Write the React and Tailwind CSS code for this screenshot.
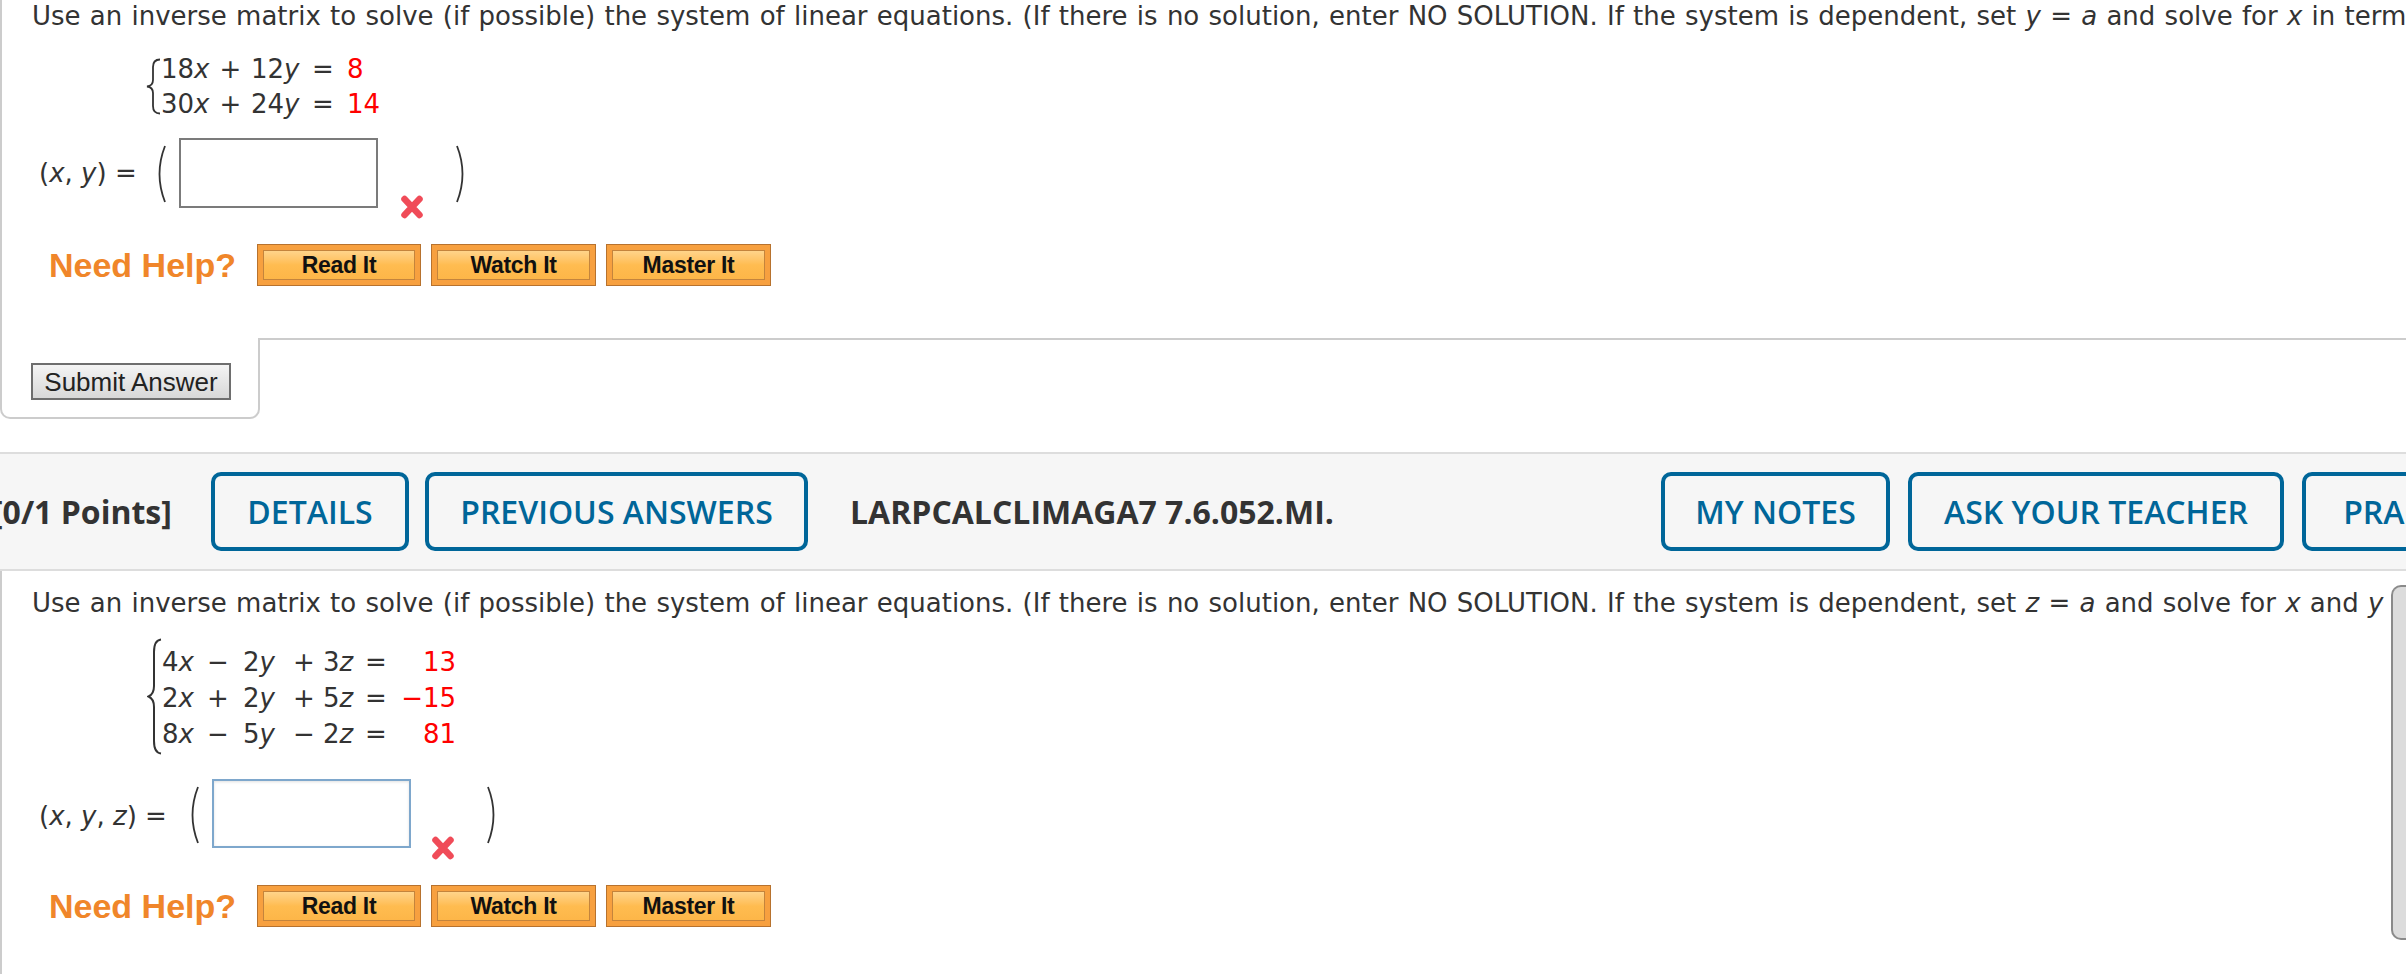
import React from 'react';

// Two-line curly brace
function Brace2() {
  return (
    <svg width="16" height="57" viewBox="0 0 16 57" className="shrink-0 mt-[6px]">
      <path d="M15 1.5 C10 1.5 8 4 8 9 L8 22 C8 26 6 28 2 28.5 C6 29 8 31 8 35 L8 48 C8 53 10 55.5 15 55.5" fill="none" stroke="#333" strokeWidth="1.8" />
    </svg>
  );
}

// Three-line curly brace
function Brace3() {
  return (
    <svg width="15" height="117" viewBox="0 0 15 117" className="shrink-0">
      <path d="M14 1.5 C9 2 7 6 7 14 L7 48 C7 54 5 57 1.5 58.5 C5 60 7 63 7 69 L7 103 C7 111 9 115 14 115.5" fill="none" stroke="#333" strokeWidth="2" />
    </svg>
  );
}

function BigParen({ right }) {
  return (
    <svg width="14" height="58" viewBox="0 0 14 58" className="shrink-0 mt-[7px]">
      <path d={right ? 'M2 1 Q13 29 2 57' : 'M12 1 Q1 29 12 57'} fill="none" stroke="#333" strokeWidth="1.8" />
    </svg>
  );
}

function RedX() {
  return (
    <svg width="26" height="28" viewBox="0 0 26 28" className="shrink-0 mt-[55px]">
      <path d="M5.5 6 L20.5 22 M20.5 6 L5.5 22" stroke="#f04b58" strokeWidth="6.5" strokeLinecap="round" />
    </svg>
  );
}

function HelpRow() {
  return (
    <div className="flex items-center h-[42px] mt-[23px]">
      <div className="w-[225px] pl-[17px] font-['Liberation_Sans',Arial,sans-serif] font-bold text-[34px] leading-none text-[#f0862a]">
        Need Help?
      </div>
      <div className="flex gap-[10px]">
        {['Read It', 'Watch It', 'Master It'].map((label, i) => (
          <div
            key={label}
            className={`${i === 0 ? 'w-[164px]' : 'w-[165px]'} h-[42px] bg-[#f7a03f] border border-[#b7722e] p-[5px]`}
          >
            <div className="h-full border border-[#c4843c] bg-gradient-to-b from-[#ffd48a] via-[#ffbc50] to-[#fdb648] flex items-center justify-center font-['Liberation_Sans',Arial,sans-serif] font-bold text-[23px] tracking-[-0.3px] text-[#111]">
              {label}
            </div>
          </div>
        ))}
      </div>
    </div>
  );
}

function HeaderBtn({ w, children }) {
  return (
    <div className={`shrink-0 ${w} h-[79px] border-4 border-[#006699] rounded-[10px] flex items-center justify-center text-[#006699] text-[32px] font-semibold`}>
      {children}
    </div>
  );
}

export default function App() {
  return (
    <div className="relative w-[2406px] h-[974px] overflow-hidden bg-white text-[#333] font-['DejaVu_Sans',Verdana,sans-serif]">
      {/* Question 1 */}
      <div className="border-l-2 border-[#cccccc] pl-[30px] pt-[1px] pb-[52px]">
        <p className="text-[26px] leading-[30px] whitespace-nowrap [word-spacing:1px]">
          Use an inverse matrix to solve (if possible) the system of linear equations. (If there is no solution, enter NO SOLUTION. If the system is dependent, set <i>y</i> = <i>a</i> and solve for <i>x</i> in terms of <i>a</i>.)
        </p>

        <div className="flex items-start mt-[21px] ml-[113px]">
          <Brace2 />
          <div className="grid grid-cols-[52px_35px_51px_48px_auto] text-[26px] leading-[35px] whitespace-nowrap">
            <span>18<i>x</i></span><span className="text-center">+</span><span className="pl-[3px]">12<i>y</i></span><span className="text-center">=</span><span className="text-[#ff0000]">8</span>
            <span>30<i>x</i></span><span className="text-center">+</span><span className="pl-[3px]">24<i>y</i></span><span className="text-center">=</span><span className="text-[#ff0000]">14</span>
          </div>
        </div>

        <div className="flex items-start mt-[16px]">
          <span className="w-[114px] ml-[7px] mt-[20px] text-[26px] leading-[30px] whitespace-nowrap">
            (<i>x</i>, <i>y</i>) =
          </span>
          <BigParen />
          <div className="ml-[12px] w-[199px] h-[70px] border-2 border-[#7b7b7b] bg-white shrink-0" />
          <div className="ml-[21px]"><RedX /></div>
          <div className="ml-[30px]"><BigParen right /></div>
        </div>

        <HelpRow />
      </div>

      {/* Submit tab */}
      <div className="flex">
        <div className="w-[260px] h-[81px] shrink-0 border-l-2 border-r-2 border-b-2 border-[#cccccc] rounded-b-[10px] pl-[29px] pt-[25px]">
          <button className="w-[200px] h-[37px] border-2 border-[#6e6e6e] bg-gradient-to-b from-[#f4f4f4] to-[#d8d8d8] font-['Liberation_Sans',Arial,sans-serif] text-[26px] leading-none text-[#222]">
            Submit Answer
          </button>
        </div>
        <div className="flex-1 border-t-2 border-[#cccccc]" />
      </div>

      {/* Question 2 header */}
      <div className="mt-[33px] h-[119px] flex items-center bg-[#f6f6f6] border-y-2 border-[#dddddd] font-['Open_Sans',sans-serif] whitespace-nowrap">
        <div className="w-[1661px] shrink-0 flex items-center">
          <span className="ml-[-8px] w-[219px] shrink-0 text-[32px] font-bold text-[#333]">[0/1 Points]</span>
          <HeaderBtn w="w-[198px]">DETAILS</HeaderBtn>
          <div className="ml-[16px]">
            <HeaderBtn w="w-[383px]">PREVIOUS ANSWERS</HeaderBtn>
          </div>
          <span className="ml-[42px] text-[32px] font-bold text-[#333]">LARPCALCLIMAGA7 7.6.052.MI.</span>
        </div>
        <div className="flex items-center gap-[18px] shrink-0">
          <HeaderBtn w="w-[229px]">MY NOTES</HeaderBtn>
          <HeaderBtn w="w-[376px]">ASK YOUR TEACHER</HeaderBtn>
          <HeaderBtn w="w-[390px]">PRACTICE ANOTHER</HeaderBtn>
        </div>
      </div>

      {/* Question 2 */}
      <div className="border-l-2 border-[#cccccc] pl-[30px] pt-[17px] h-[403px]">
        <p className="text-[26px] leading-[30px] whitespace-nowrap [word-spacing:1px]">
          Use an inverse matrix to solve (if possible) the system of linear equations. (If there is no solution, enter NO SOLUTION. If the system is dependent, set <i>z</i> = <i>a</i> and solve for <i>x</i> and <i>y</i> in terms of <i>a</i>.)
        </p>

        <div className="flex items-start mt-[20px] ml-[115px]">
          <Brace3 />
          <div className="mt-[6px] grid grid-cols-[40px_32px_58px_24px_46px_28px_66px] text-[26px] leading-[36px] whitespace-nowrap">
            <span>4<i>x</i></span><span className="text-center">−</span><span className="pl-[9px]">2<i>y</i></span><span className="text-center">+</span><span className="pl-[7px]">3<i>z</i></span><span className="text-center">=</span><span className="text-right text-[#ff0000]">13</span>
            <span>2<i>x</i></span><span className="text-center">+</span><span className="pl-[9px]">2<i>y</i></span><span className="text-center">+</span><span className="pl-[7px]">5<i>z</i></span><span className="text-center">=</span><span className="text-right text-[#ff0000]">−15</span>
            <span>8<i>x</i></span><span className="text-center">−</span><span className="pl-[9px]">5<i>y</i></span><span className="text-center">−</span><span className="pl-[7px]">2<i>z</i></span><span className="text-center">=</span><span className="text-right text-[#ff0000]">81</span>
          </div>
        </div>

        <div className="flex items-start mt-[24px]">
          <span className="w-[147px] ml-[7px] mt-[22px] text-[26px] leading-[30px] whitespace-nowrap">
            (<i>x</i>, <i>y</i>, <i>z</i>) =
          </span>
          <BigParen />
          <div className="ml-[12px] w-[199px] h-[69px] border-2 border-[#7ea7cc] bg-white shadow-[inset_0_1px_3px_rgba(0,0,0,0.12)] shrink-0" />
          <div className="ml-[19px]"><RedX /></div>
          <div className="ml-[30px]"><BigParen right /></div>
        </div>

        <HelpRow />
      </div>

      {/* Side tab on the right edge */}
      <div className="absolute right-0 top-[585px] w-[15px] h-[355px] border-2 border-r-0 border-[#8a8a8a] rounded-l-[10px] bg-[#dcdcdc]" />
    </div>
  );
}
